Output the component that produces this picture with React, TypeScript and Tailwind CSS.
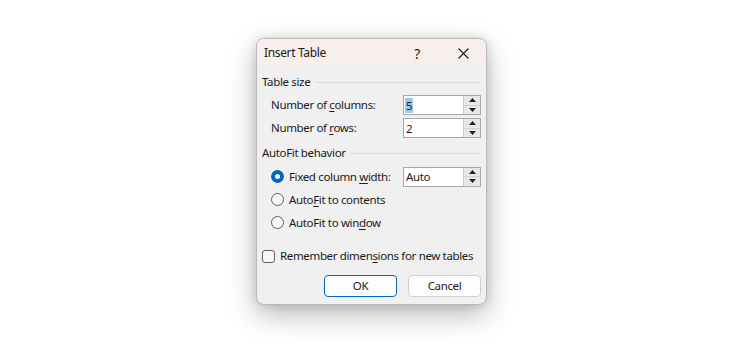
import React from "react";

const font = { fontFamily: '"Segoe UI", "Noto Sans", "Liberation Sans", sans-serif' };

function U({ children }: { children: React.ReactNode }) {
  return <span className="underline underline-offset-2 decoration-1">{children}</span>;
}

function Spinner() {
  return (
    <div className="flex flex-col w-[17px] h-full border-l border-[#c8c8c8] bg-[#f0f0f0]">
      <div className="flex-1 flex items-center justify-center border-b border-[#d0d0d0] bg-[#e8e8e8]">
        <svg width="7" height="4" viewBox="0 0 7 4"><path d="M0 4 L3.5 0 L7 4 Z" fill="#222" /></svg>
      </div>
      <div className="flex-1 flex items-center justify-center bg-[#e8e8e8]">
        <svg width="7" height="4" viewBox="0 0 7 4"><path d="M0 0 L3.5 4 L7 0 Z" fill="#222" /></svg>
      </div>
    </div>
  );
}

function SpinInput({ value, selected }: { value: string; selected?: boolean }) {
  return (
    <div className="flex shrink-0 h-[20px] w-[78px] border border-[#a8a8a8] bg-white">
      <div className="flex-1 flex items-center pl-[1px]">
        <span className={selected ? "bg-[#99c9ef] leading-[15px] px-[1px]" : "leading-[15px] px-[1px]"}>{value}</span>
      </div>
      <Spinner />
    </div>
  );
}

function GroupHeader({ label }: { label: string }) {
  return (
    <div className="flex items-center h-[16px]">
      <span className="whitespace-nowrap">{label}</span>
      <div className="flex-1 ml-[5px] h-px bg-[#dadada]" />
    </div>
  );
}

function Radio({ checked }: { checked?: boolean }) {
  if (checked) {
    return (
      <div className="shrink-0 w-[13px] h-[13px] rounded-full bg-[#0067c0] flex items-center justify-center">
        <div className="w-[5px] h-[5px] rounded-full bg-white" />
      </div>
    );
  }
  return <div className="shrink-0 w-[13px] h-[13px] rounded-full border border-[#5f5f5f] bg-[#f7f7f7]" />;
}

export default function App() {
  return (
    <div className="w-[750px] h-[360px] bg-white overflow-hidden" style={font}>
      <div className="pl-[256px] pt-[38px]">
        <div className="w-[231px] h-[267px] rounded-[8px] border border-[#b9b9b9] bg-[#f0f0f0] overflow-hidden flex flex-col text-[11.5px] tracking-[-0.35px] text-[#1a1a1a] whitespace-nowrap shadow-[0_10px_28px_rgba(0,0,0,0.28),0_0_10px_rgba(0,0,0,0.12)]">
          <div className="h-[28px] bg-[#f6efec] flex items-center shrink-0">
            <span className="pl-[7px] flex-1 text-[12px]">Insert Table</span>
            <div className="w-[46px] flex justify-center text-[14px]">?</div>
            <div className="w-[46px] flex justify-center">
              <svg width="11" height="11" viewBox="0 0 11 11">
                <path d="M0.5 0.5 L10.5 10.5 M10.5 0.5 L0.5 10.5" stroke="#1a1a1a" strokeWidth="1.1" />
              </svg>
            </div>
          </div>
          <div className="flex flex-col px-[5px] pt-[7px]">
            <GroupHeader label="Table size" />
            <div className="flex items-center pl-[9px] mt-[5px]">
              <span className="flex-1">Number of <U>c</U>olumns:</span>
              <SpinInput value="5" selected />
            </div>
            <div className="flex items-center pl-[9px] mt-[3px]">
              <span className="flex-1">Number of <U>r</U>ows:</span>
              <SpinInput value="2" />
            </div>
            <div className="mt-[7px]">
              <GroupHeader label="AutoFit behavior" />
            </div>
            <div className="flex flex-col pl-[9px] mt-[4px]">
              <div className="flex items-center h-[23px]">
                <Radio checked />
                <span className="ml-[5px] flex-1">Fixed column <U>w</U>idth:</span>
                <SpinInput value="Auto" />
              </div>
              <div className="flex items-center h-[23px]">
                <Radio />
                <span className="ml-[5px]">Auto<U>F</U>it to contents</span>
              </div>
              <div className="flex items-center h-[23px]">
                <Radio />
                <span className="ml-[5px]">AutoFit to win<U>d</U>ow</span>
              </div>
            </div>
            <div className="flex items-center h-[16px] mt-[14px]">
              <div className="shrink-0 w-[13px] h-[13px] rounded-[3px] border border-[#5f5f5f] bg-[#f7f7f7]" />
              <span className="ml-[5px]">Remember dimen<U>s</U>ions for new tables</span>
            </div>
            <div className="flex justify-end gap-[11px] mt-[11px]">
              <button className="w-[73px] h-[22px] rounded-[4px] border border-[#0067c0] bg-[#fdfdfd] text-[11.5px]">OK</button>
              <button className="w-[73px] h-[22px] rounded-[4px] border border-[#d0d0d0] bg-[#fdfdfd] text-[11.5px]">Cancel</button>
            </div>
          </div>
        </div>
      </div>
    </div>
  );
}
